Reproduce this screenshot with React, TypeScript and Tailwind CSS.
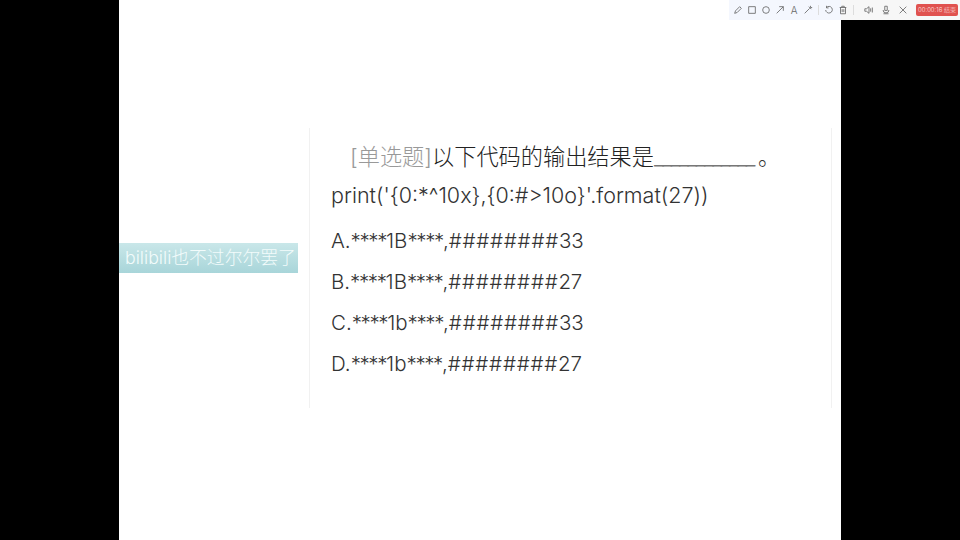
import React from "react";

const font = { fontFamily: '"Inter", "Noto Sans CJK SC", sans-serif' };

function Ico({ children }: { children: React.ReactNode }) {
  return (
    <div className="flex w-[14px] shrink-0 justify-center">
      <svg width="10" height="10" viewBox="0 0 12 12" fill="none" stroke="#666" strokeWidth="1">
        {children}
      </svg>
    </div>
  );
}

function Toolbar() {
  return (
    <div className="absolute top-0 right-0 flex h-5 w-[231px] items-center bg-[linear-gradient(90deg,#f4f7fe_112px,#f7f7f7_112px)] pl-[2px]">
      <Ico><path d="M2 10l1-3 5-5 2 2-5 5-3 1z" /></Ico>
      <Ico><path d="M2 2h8v8H2z" /></Ico>
      <Ico><circle cx="6" cy="6" r="4" /></Ico>
      <Ico><path d="M2 10L10 2M5 2h5v5" /></Ico>
      <div className="w-[14px] shrink-0 text-center text-[10px] leading-none text-[#666]">A</div>
      <Ico><path d="M2 10l6-6M7 2l3 3M9 1v2M11 3H9" /></Ico>
      <div className="ml-[3px] mr-[3px] h-[10px] w-px shrink-0 bg-[#ddd]" />
      <Ico><path d="M3 3a4 4 0 1 1-1 3M3 1v2.5h2.5" /></Ico>
      <Ico><path d="M2 3h8M4.5 3V1.5h3V3M3 3v7.5h6V3M5 5v3.5M7 5v3.5" /></Ico>
      <div className="ml-[3px] mr-[8px] h-[10px] w-px shrink-0 bg-[#ddd]" />
      <Ico><path d="M1 4.5h2L6 2v8L3 7.5H1zM8 4v4M10 3v6" /></Ico>
      <div className="w-[3px] shrink-0" />
      <Ico><path d="M4.5 1.5h3v5h-3zM2.5 6a3.5 3.5 0 0 0 7 0M3 10.5h6" /></Ico>
      <div className="w-[3px] shrink-0" />
      <Ico><path d="M2 2l8 8M10 2l-8 8" /></Ico>
      <div className="ml-[6px] flex h-[12px] w-[42px] shrink-0 items-center justify-center rounded-[2px] bg-[#e0524f] text-[6px] leading-none whitespace-nowrap text-[#ffe3e0]">
        00:00:16 结束
      </div>
    </div>
  );
}

const options = [
  ["A.", "1B", "33"],
  ["B.", "1B", "27"],
  ["C.", "1b", "33"],
  ["D.", "1b", "27"],
];

export default function App() {
  return (
    <div className="relative flex h-[540px] w-[960px] overflow-hidden bg-black font-light" style={font}>
      <div className="ml-[119px] flex h-full w-[722px] items-start bg-white pt-[128px]">
        <div className="mt-[115px] flex h-[30px] w-[179px] shrink-0 items-center bg-gradient-to-b from-[#c9e7e9] to-[#a8d5d9] pl-[6px] text-[17.8px] leading-none whitespace-nowrap text-[#f2fbfb]">
          bilibili也不过尔尔罢了
        </div>
        <div className="ml-[11px] h-[280px] w-[523px] shrink-0 border-x border-[#f1f1f1] pl-[21px] text-[#333]">
          <div className="mt-[13px] pl-[19px] text-[22.2px] leading-[32px] whitespace-nowrap">
            <span className="text-[#999]">[单选题]</span>
            <span className="text-[#222]">以下代码的输出结果是</span>
            <span className="tracking-[-1.6px] text-[#777]">____________</span>
            <span className="ml-[4px]">。</span>
          </div>
          <div className="mt-[6px] text-[21.5px] leading-[32px] whitespace-nowrap">print('&#123;0:*^10x&#125;,&#123;0:#&gt;10o&#125;'.format(27))</div>
          <div className="mt-[15px] flex flex-col gap-[11px]">
            {options.map(([label, mid, num]) => (
              <div key={label + mid + num} className="text-[20.5px] leading-[30px] whitespace-nowrap">
                {label}
                <span className="tracking-[-1.4px]">****</span>
                {mid}
                <span className="tracking-[-1.4px]">****</span>
                ,<span className="tracking-[0.8px]">########</span>
                <span className="tracking-[-0.2px]">{num}</span>
              </div>
            ))}
          </div>
        </div>
      </div>
      <Toolbar />
    </div>
  );
}
